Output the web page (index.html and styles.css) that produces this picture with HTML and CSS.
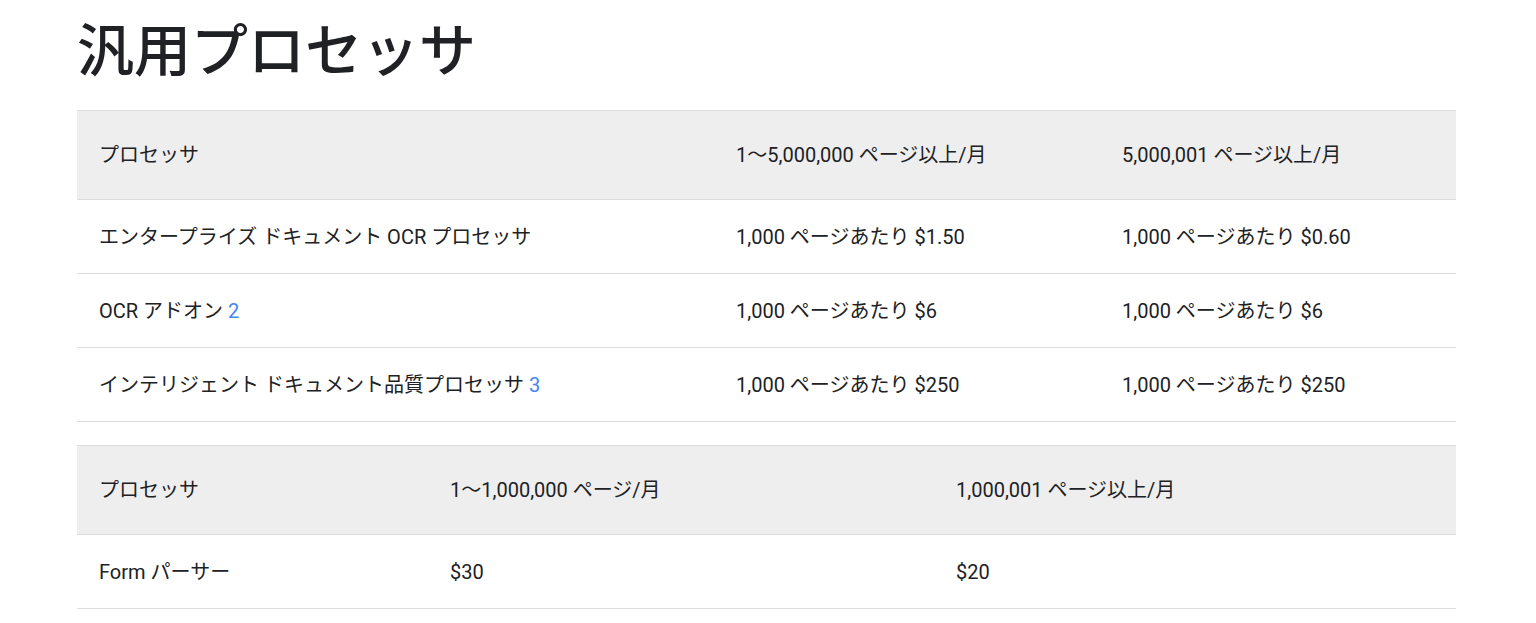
FILE: index.html
```html
<!DOCTYPE html>
<html lang="ja">
<head>
<meta charset="utf-8">
<title>汎用プロセッサ</title>
<link rel="stylesheet" href="styles.css">
</head>
<body>
<main class="page">
  <h1 class="title">汎用プロセッサ</h1>
  <table class="price-table t1">
    <colgroup><col class="c1"><col class="c2"><col class="c3"></colgroup>
    <thead>
      <tr><th>プロセッサ</th><th>1～5,000,000 ページ以上/月</th><th>5,000,001 ページ以上/月</th></tr>
    </thead>
    <tbody>
      <tr><td>エンタープライズ ドキュメント OCR プロセッサ</td><td>1,000 ページあたり $1.50</td><td>1,000 ページあたり $0.60</td></tr>
      <tr><td>OCR アドオン <a class="note" href="#">2</a></td><td>1,000 ページあたり $6</td><td>1,000 ページあたり $6</td></tr>
      <tr><td>インテリジェント ドキュメント品質プロセッサ <a class="note" href="#">3</a></td><td>1,000 ページあたり $250</td><td>1,000 ページあたり $250</td></tr>
    </tbody>
  </table>
  <table class="price-table t2">
    <colgroup><col class="d1"><col class="d2"><col class="d3"></colgroup>
    <thead>
      <tr><th>プロセッサ</th><th>1～1,000,000 ページ/月</th><th>1,000,001 ページ以上/月</th></tr>
    </thead>
    <tbody>
      <tr><td>Form パーサー</td><td>$30</td><td>$20</td></tr>
    </tbody>
  </table>
</main>
</body>
</html>
```

FILE: styles.css
```css
html, body {
  margin: 0;
  padding: 0;
  background: #ffffff;
}
body {
  font-family: Roboto, "Noto Sans CJK JP", sans-serif;
  color: #202124;
}
.page {
  width: 1379px;
  padding: 10px 0 0 77px;
}
.title {
  margin: 0 0 28px 0;
  font-family: "Noto Sans CJK JP", sans-serif;
  font-weight: 500;
  font-size: 57px;
  line-height: 72px;
  color: #202124;
}
.price-table {
  width: 1379px;
  border-collapse: collapse;
  table-layout: fixed;
  font-size: 20px;
  margin-bottom: 23px;
}
.price-table th,
.price-table td {
  text-align: left;
  font-weight: 400;
  padding: 0 24px;
  vertical-align: middle;
  border-top: 1px solid #dadce0;
  border-bottom: 1px solid #dadce0;
  line-height: 28px;
  white-space: nowrap;
}
.price-table th:first-child,
.price-table td:first-child {
  padding-left: 22px;
}
.price-table th {
  background: #eeeeee;
  height: 88px;
}
.price-table td {
  height: 73px;
}
.c1 { width: 635px; }
.c2 { width: 386px; }
.c3 { width: 358px; }
.d1 { width: 349px; }
.d2 { width: 506px; }
.d3 { width: 524px; }
.note {
  color: #4285f4;
  text-decoration: none;
}
```
